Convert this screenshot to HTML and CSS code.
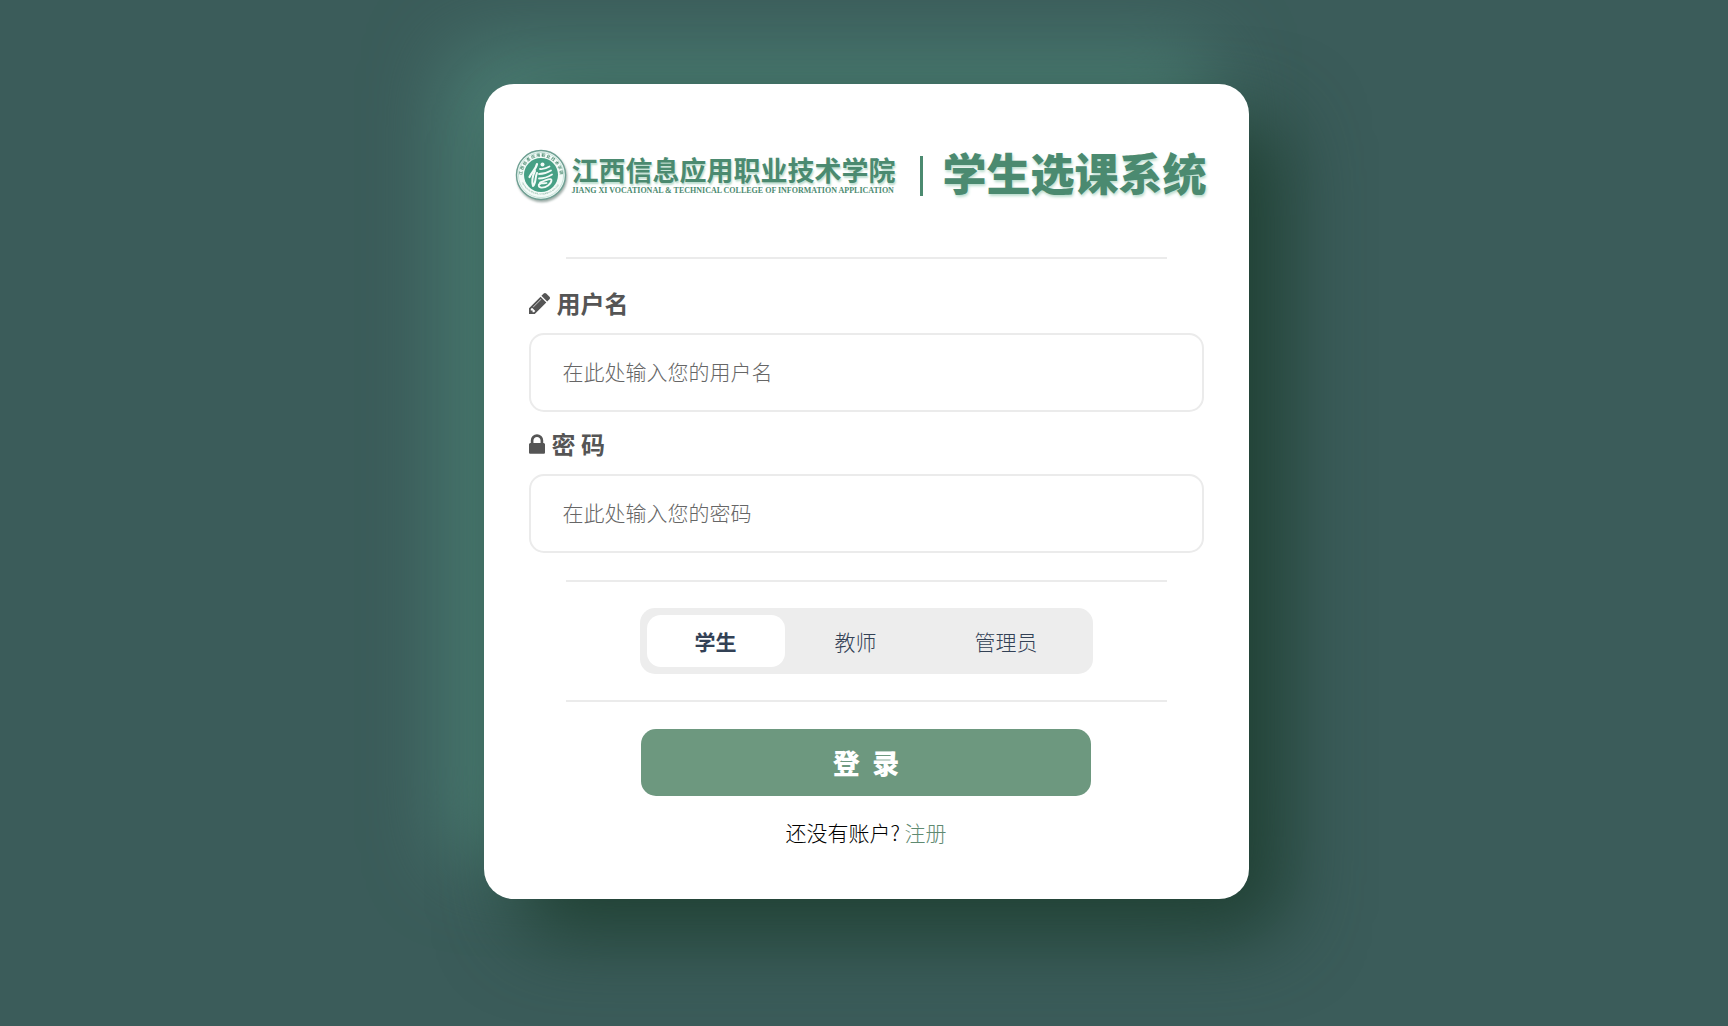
FILE: index.html
```html
<!DOCTYPE html>
<html lang="zh-CN">
  <head>
    <meta charset="UTF-8">
    <title>学生选课系统</title>
    <meta name="viewport" content="width=device-width, initial-scale=1.0">
    <link rel="stylesheet" href="styles.css">
  </head>
  <body>
    <main class="card">
      <header class="logo">
        <svg class="emblem" viewBox="0 0 54 54" aria-hidden="true">
          <defs>
            <path id="ring-top" d="M9.500 34 A19 19 0 1 1 44.500 34" />
            <path id="ring-bottom" d="M7 32 A21.5 21.5 0 0 0 47 32" />
          </defs>
          <circle cx="27" cy="26" r="24.5" fill="#f3fbf8" stroke="#6d9f92" stroke-width="1.4" />
          <circle cx="27" cy="26" r="22.6" fill="none" stroke="#a9d3c6" stroke-width=".6" />
          <circle cx="27" cy="26" r="17" fill="#46a085" />
          <text class="ring-name"><textPath href="#ring-top" startOffset="8">江 西 信 息 应 用 职 业 技 术 学 院</textPath></text>
          <text class="ring-latin"><textPath href="#ring-bottom" startOffset="2">JIANGXI VOCATIONAL &amp; TECHNICAL COLLEGE</textPath></text>
          <g fill="none" stroke="#f3fbf8" stroke-linecap="round" stroke-linejoin="round">
            <path d="M23 15 C22 20 18 23 15.5 28" stroke-width="2.2" />
            <path d="M21 22 C18.500 27 17.500 32 19 37 C22 35 21 28 23 24" stroke-width="2" />
            <path d="M26 20 C29 20.500 32 19.500 35.500 17.500" stroke-width="1.800" />
            <path d="M25 25 C29 25 33 24 37 21.500" stroke-width="1.800" />
            <path d="M25 29.500 C29 29.500 34 28 38 25.500" stroke-width="1.800" />
            <path d="M26 33.500 C30 32 37 28.500 37.500 31 C37.500 35 32 39 27 38.500 C24 38 24 35 27 34.500 C29 34 31 34.500 32.500 34" stroke-width="1.800" />
          </g>
          <circle cx="28.500" cy="15.500" r="2" fill="#f3fbf8" />
        </svg>
        <div class="college">
          <span class="college-name">江西信息应用职业技术学院</span>
          <span class="college-latin">JIANG XI VOCATIONAL &amp; TECHNICAL COLLEGE OF INFORMATION APPLICATION</span>
        </div>
        <h1 class="system-name">学生选课系统</h1>
      </header>

      <form class="login-form">
        <hr>
        <div class="field">
          <label for="username">
            <svg class="icon-pencil" viewBox="128 149 1515 1515" aria-hidden="true"><path d="M491 1536l91-91-235-235-91 91v107h128v128h107zM1014 608q0-22-22-22-10 0-17 7l-542 542q-7 7-7 17 0 22 22 22 10 0 17-7l542-542q7-7 7-17zM960 416l416 416-832 832h-416v-416zM1643 512q0 53-37 90l-166 166-416-416 166-165q36-38 90-38 53 0 91 38l235 234q37 39 37 91z" /></svg>
            用户名
          </label>
          <input type="text" id="username" name="username" placeholder="在此处输入您的用户名">
        </div>
        <div class="field">
          <label for="password">
            <svg class="icon-lock" viewBox="320 128 1152 1408" aria-hidden="true"><path d="M640 768h512v-192q0-106-75-181t-181-75-181 75-75 181v192zm832 96v576q0 40-28 68t-68 28h-960q-40 0-68-28t-28-68v-576q0-40 28-68t68-28h32v-192q0-184 132-316t316-132 316 132 132 316v192h32q40 0 68 28t28 68z" /></svg>
            密 码
          </label>
          <input type="password" id="password" name="password" placeholder="在此处输入您的密码">
        </div>
        <hr>
        <div class="roles" role="radiogroup" aria-label="身份">
          <label class="role"><input type="radio" name="role" value="student" checked><span>学生</span></label>
          <label class="role"><input type="radio" name="role" value="teacher"><span>教师</span></label>
          <label class="role"><input type="radio" name="role" value="admin"><span>管理员</span></label>
        </div>
        <hr>
        <button type="submit" class="login-btn">登&nbsp;&nbsp;录</button>
        <p class="register">还没有账户? <a href="#">注册</a></p>
      </form>
    </main>
  </body>
</html>
```
FILE: styles.css
```css
* {
  box-sizing: border-box;
}
body {
  font-family: "Noto Sans CJK SC", sans-serif;
  font-size: 21px;
  font-weight: 300;
  line-height: 30px;
  background-color: #3b5c5a;
  margin: 0;
  padding: 84px 16px 40px 20px;
  display: flex;
  justify-content: center;
  align-items: flex-start;
  min-height: 100vh;
}
.card {
  max-width: 765px;
  width: 100%;
  background-color: white;
  padding: 64px 30px 52px;
  border-radius: 30px;
  box-shadow: 35px 35px 80px #1f3f32, -35px -35px 80px #4d8076;
}

/* logo */
.logo {
  display: flex;
  align-items: center;
  height: 56px;
  color: #4b8a70;
}
.emblem {
  width: 54px;
  height: 54px;
  flex: none;
  filter: drop-shadow(1px 2px 1px rgba(60, 90, 80, 0.5));
}
.ring-name {
  font-size: 4px;
  font-weight: 700;
  fill: #4b8a70;
}
.ring-latin {
  font-family: "Liberation Serif", serif;
  font-size: 2px;
  fill: #4b8a70;
}
.college {
  display: flex;
  flex-direction: column;
  margin-left: 4px;
  padding-right: 24px;
  white-space: nowrap;
}
.college-name {
  font-size: 27px;
  font-weight: 700;
  line-height: 30px;
  text-shadow: 1px 2px 2px #b9dccd;
}
.college-latin {
  font-family: "Liberation Serif", serif;
  font-size: 8px;
  font-weight: 700;
  line-height: 12px;
}
.system-name {
  display: flex;
  align-items: center;
  gap: 20px;
  margin: 0;
  font-size: 44px;
  font-weight: 900;
  line-height: 48px;
  padding-bottom: 8px;
  white-space: nowrap;
  text-shadow: 1px 2px 3px #b9dccd;
}
.system-name::before {
  content: "";
  align-self: flex-end;
  width: 3px;
  height: 40px;
  background-color: #4b8a70;
}

/* form */
.login-form {
  margin: 53px 15px 0;
  display: flex;
  flex-direction: column;
  align-items: center;
}
hr {
  width: 601px;
  max-width: 90%;
  height: 2px;
  margin: 0;
  border: 0;
  background-color: #ebebeb;
}
.field {
  width: 100%;
  margin-top: 28px;
}
.field + .field {
  margin-top: 16px;
}
.field + hr {
  margin-top: 27px;
}
.field label {
  display: flex;
  align-items: center;
  gap: 7px;
  height: 32px;
  margin-bottom: 14px;
  font-size: 24px;
  font-weight: 700;
  color: #555;
}
.field svg {
  fill: #555;
}
.icon-pencil {
  width: 21px;
  height: 21px;
}
.icon-lock {
  width: 16px;
  height: 20px;
}
.field input {
  display: block;
  width: 100%;
  height: 79px;
  padding: 0 32px 4px;
  border: 2px solid #ebebeb;
  border-radius: 15px;
  background-color: white;
  font: inherit;
}
.field input::placeholder {
  color: #666;
}

/* role switch */
.roles {
  display: flex;
  gap: 2px;
  margin: 26px 0;
  padding: 7px;
  border-radius: 15px;
  background-color: #ededed;
}
.role input {
  position: absolute;
  opacity: 0;
}
.role span {
  display: block;
  padding: 11px 48px;
  border-radius: 14px;
  color: #334155;
  cursor: pointer;
}
.role input:checked + span {
  background-color: white;
  font-weight: 700;
}

.login-btn {
  width: 450px;
  max-width: 100%;
  height: 67px;
  margin-top: 27px;
  border: 0;
  border-radius: 15px;
  background-color: #6d987f;
  color: white;
  font: inherit;
  font-size: 27px;
  font-weight: 900;
  cursor: pointer;
}
.register {
  margin: 21px 0 0;
  color: black;
}
.register a {
  color: #5f8a71;
  text-decoration: none;
}
```
